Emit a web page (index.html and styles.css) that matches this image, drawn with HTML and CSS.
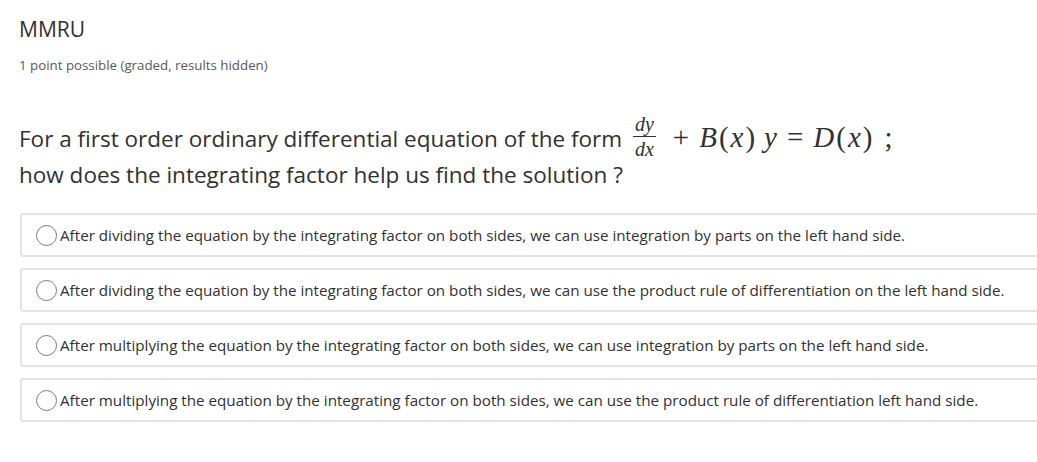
FILE: index.html
```html
<!DOCTYPE html>
<html>
<head>
<meta charset="utf-8">
<link rel="stylesheet" href="styles.css">
</head>
<body>
<div class="problem">
  <h3 class="title">MMRU</h3>
  <div class="points">1 point possible (graded, results hidden)</div>
  <p class="question">For a first order ordinary differential equation of the form <span class="math"><span class="frac"><span class="num">dy</span><span class="den">dx</span></span><span class="op">+</span><span class="mi">B</span><span class="paren">(</span><span class="mi">x</span><span class="paren">)</span><span class="mi sp">y</span><span class="op">=</span><span class="mi">D</span><span class="paren">(</span><span class="mi">x</span><span class="paren">)</span><span class="semi">;</span></span><br>how does the integrating factor help us find the solution ?</p>
  <div class="choices">
    <label class="choice"><span class="radio"></span><span class="text">After dividing the equation by the integrating factor on both sides, we can use integration by parts on the left hand side.</span></label>
    <label class="choice"><span class="radio"></span><span class="text">After dividing the equation by the integrating factor on both sides, we can use the product rule of differentiation on the left hand side.</span></label>
    <label class="choice"><span class="radio"></span><span class="text">After multiplying the equation by the integrating factor on both sides, we can use integration by parts on the left hand side.</span></label>
    <label class="choice"><span class="radio"></span><span class="text">After multiplying the equation by the integrating factor on both sides, we can use the product rule of differentiation left hand side.</span></label>
  </div>
</div>
</body>
</html>
```
FILE: styles.css
```css
html, body {
  margin: 0;
  padding: 0;
  background: #fff;
  overflow: hidden;
}
body {
  font-family: "Open Sans", "Noto Sans", sans-serif;
  color: #313131;
}
.problem {
  padding: 16px 0 0 19px;
}
.title {
  margin: 0;
  font-size: 21px;
  font-weight: 400;
  line-height: 26px;
  color: #313131;
}
.points {
  margin-top: 14px;
  font-size: 13.3px;
  line-height: 18px;
  color: #5a5a5a;
}
.question {
  margin: 47px 0 0 0;
  font-size: 22.5px;
  line-height: 36px;
  color: #313131;
}
.math {
  font-family: "Liberation Serif", serif;
  font-size: 29px;
  line-height: 1;
  white-space: nowrap;
  margin-left: 1px;
}
.frac {
  display: inline-flex;
  flex-direction: column;
  align-items: center;
  vertical-align: middle;
  font-size: 20px;
  line-height: 20px;
  font-style: italic;
  margin: -6px 7px -6px 4px;
  position: relative;
  top: -4px;
}
.frac .num {
  border-bottom: 1px solid #313131;
  padding: 0 2px 2px;
}
.frac .den {
  padding-top: 2px;
}
.mi { font-style: italic; }
.op { margin: 0 10px; }
.paren { margin: 0 2px; }
.sp { margin-left: 7px; }
.semi { margin-left: 10px; }
.choices {
  margin-top: 20px;
  display: flex;
  flex-direction: column;
  gap: 11px;
}
.choice {
  display: flex;
  align-items: center;
  height: 40px;
  width: 1030px;
  border: 2px solid #e4e4e4;
  border-radius: 3px;
  margin-left: 1px;
  padding-left: 14px;
  font-size: 15.2px;
  color: #313131;
}
.radio {
  width: 19px;
  height: 19px;
  border: 1px solid #7a7a7a;
  border-radius: 50%;
  flex: none;
  margin-right: 3px;
}
```
